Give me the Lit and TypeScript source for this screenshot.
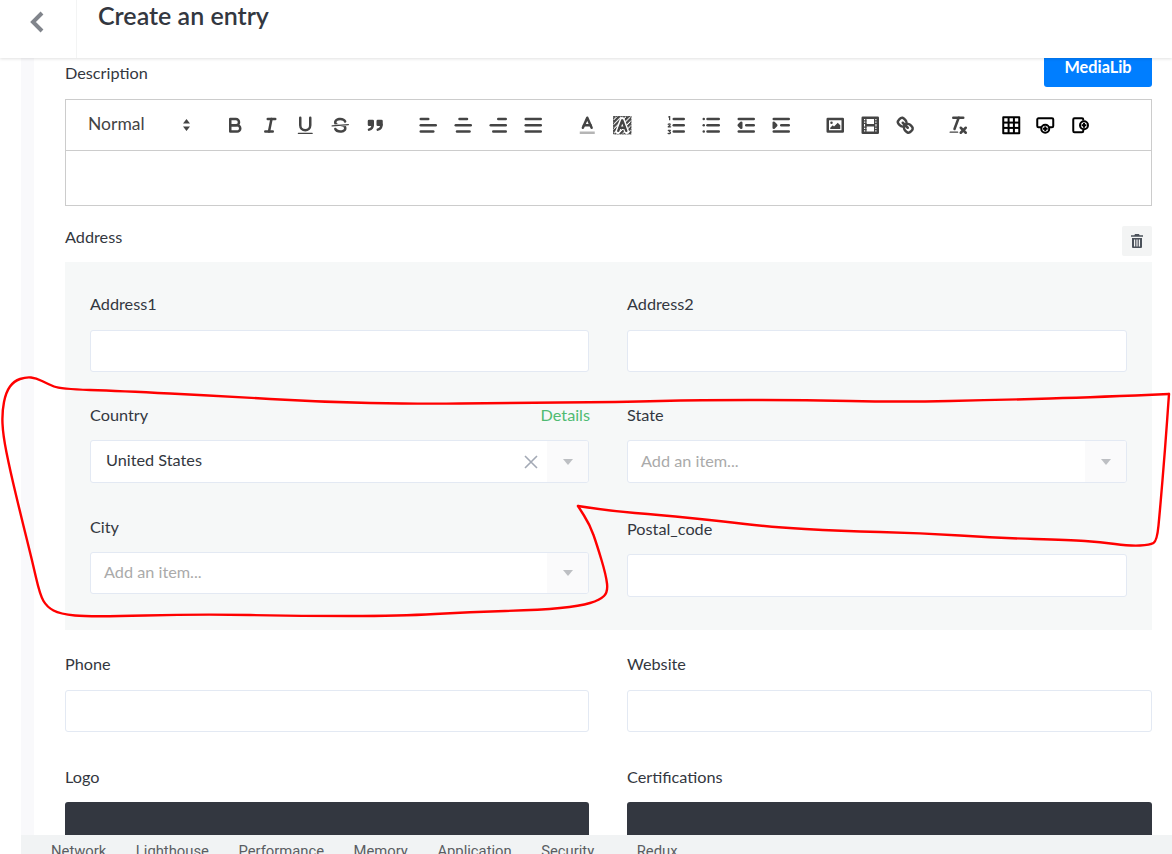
import { LitElement, html, css, svg } from "lit";
import { customElement } from "lit/decorators.js";

const line = (x1: number, x2: number, y1: number, y2: number) =>
  svg`<line x1=${x1} x2=${x2} y1=${y1} y2=${y2}></line>`;
const fr = (x: number, y: number, w: number, h: number) =>
  svg`<rect class="f" x=${x} y=${y} width=${w} height=${h}></rect>`;

const I = {
  bold: svg`<path d="M5,4H9.5A2.5,2.5,0,0,1,12,6.5v0A2.5,2.5,0,0,1,9.5,9H5V4Z"></path><path d="M5,9h5.5A2.5,2.5,0,0,1,13,11.5v0A2.5,2.5,0,0,1,10.5,14H5V9Z"></path>`,
  italic: svg`${line(7, 13, 4, 4)}${line(5, 11, 14, 14)}${line(8, 10, 14, 4)}`,
  underline: svg`<path d="M5,3V9a4,4,0,0,0,4,4H9a4,4,0,0,0,4-4V3"></path><rect class="f" x="3" y="15" width="12" height="1" rx=".5"></rect>`,
  strike: svg`<line class="thin" x1="15.5" x2="2.5" y1="8.5" y2="9.5"></line><path class="f" d="M9.007,8C6.542,7.791,6,7.519,6,6.5,6,5.792,7.283,5,9,5c1.571,0,2.765.679,2.969,1.309a1,1,0,0,0,1.9-.617C13.356,4.106,11.354,3,9,3,6.2,3,4,4.538,4,6.5a3.2,3.2,0,0,0,.5,1.843Z"></path><path class="f" d="M8.984,10C11.457,10.208,12,10.479,12,11.5c0,.708-1.283,1.5-3,1.5-1.571,0-2.765-.679-2.969-1.309a1,1,0,1,0-1.9.617C4.644,13.894,6.646,15,9,15c2.8,0,5-1.538,5-3.5a3.2,3.2,0,0,0-.5-1.843Z"></path>`,
  quote: svg`<rect class="fs" x="4" y="5.5" width="3" height="3"></rect><rect class="fs" x="11" y="5.5" width="3" height="3"></rect><path d="M7,8.5c0,2.209-1.343,3.5-3,4"></path><path d="M14,8.5c0,2.209-1.343,3.5-3,4"></path>`,
  left: svg`${line(3, 15, 9, 9)}${line(3, 13, 14, 14)}${line(3, 9, 4, 4)}`,
  center: svg`${line(3, 15, 9, 9)}${line(4, 14, 14, 14)}${line(6, 12, 4, 4)}`,
  right: svg`${line(3, 15, 9, 9)}${line(5, 15, 14, 14)}${line(9, 15, 4, 4)}`,
  justify: svg`${line(3, 15, 9, 9)}${line(3, 15, 14, 14)}${line(3, 15, 4, 4)}`,
  color: svg`<line class="swatch" x1="3" x2="15" y1="15" y2="15"></line><polyline points="5.5 11 9 3 12.5 11"></polyline>${line(11.63, 6.38, 9, 9)}`,
  background: svg`<defs><pattern id="hatch" width="2.6" height="2.6" patternUnits="userSpaceOnUse" patternTransform="rotate(-45)"><rect width="2.6" height="0.8" fill="#444"></rect></pattern></defs><rect class="hatch" x="2" y="2" width="14" height="14" fill="url(#hatch)"></rect><g class="halo"><polyline points="5.5 14 9 4.5 12.5 14"></polyline></g><polyline class="mid" points="5.8 13.5 9 5 12.2 13.5"></polyline>${line(11, 7, 11, 11)}`,
  ordered: svg`${line(7, 15, 4, 4)}${line(7, 15, 9, 9)}${line(7, 15, 14, 14)}<path class="f" d="M3.2,1.6h1V5h-1V2.8h-.7V2.2Z"></path><path class="thin" d="M2.6,8.2q.9-.8,1.6,0q.2.6-1.6,2h1.9"></path><path class="thin" d="M2.6,13h1.7l-.9,1.1q1.3.2.8,1.3q-.7.7-1.7.1"></path>`,
  bullet: svg`${line(6, 15, 4, 4)}${line(6, 15, 9, 9)}${line(6, 15, 14, 14)}${line(3, 3, 4, 4)}${line(3, 3, 9, 9)}${line(3, 3, 14, 14)}`,
  outdent: svg`${line(3, 15, 14, 14)}${line(3, 15, 4, 4)}${line(9, 15, 9, 9)}<polygon class="fs" points="5 7 5 11 3 9 5 7"></polygon>`,
  indent: svg`${line(3, 15, 14, 14)}${line(3, 15, 4, 4)}${line(9, 15, 9, 9)}<polygon class="fs" points="3 7 3 11 5 9 3 7"></polygon>`,
  image: svg`<rect x="3" y="4" width="12" height="10"></rect><circle class="f" cx="6" cy="7" r="1"></circle><polygon class="f" points="5 12 5 11 7 9 8 10 11 7 13 9 13 12 5 12"></polygon>`,
  video: svg`<rect x="3" y="3" width="12" height="12"></rect>${fr(5, 3, 1, 12)}${fr(12, 3, 1, 12)}${fr(5, 8, 8, 2)}${fr(3, 5, 3, 1)}${fr(3, 7, 3, 1)}${fr(3, 10, 3, 1)}${fr(3, 12, 3, 1)}${fr(12, 5, 3, 1)}${fr(12, 7, 3, 1)}${fr(12, 10, 3, 1)}${fr(12, 12, 3, 1)}`,
  link: svg`${line(7, 11, 7, 11)}<path d="M8.9,4.577a3.476,3.476,0,0,1,.36,4.679A3.476,3.476,0,0,1,4.577,8.9C3.185,7.5,2.035,6.4,4.217,4.217S7.5,3.185,8.9,4.577Z"></path><path d="M13.423,9.1a3.476,3.476,0,0,0-4.679-.36,3.476,3.476,0,0,0,.36,4.679c1.392,1.392,2.5,2.542,4.679.36S14.815,10.5,13.423,9.1Z"></path>`,
  clean: svg`${line(5, 13, 3, 3)}${line(6, 9.35, 12, 3)}${line(11, 15, 11, 15)}${line(15, 11, 11, 15)}<rect class="f" x="2" y="14" width="7" height="1" rx=".5"></rect>`,
  table: svg`<g class="black"><rect x="2.6" y="2.6" width="12.8" height="12.8"></rect>${line(6.87, 6.87, 2.6, 15.4)}${line(11.13, 11.13, 2.6, 15.4)}${line(2.6, 15.4, 6.87, 6.87)}${line(2.6, 15.4, 11.13, 11.13)}</g>`,
  row: svg`<g class="black"><path d="M5,10.6H2.8a1,1,0,0,1-1-1V4.4a1,1,0,0,1,1-1H13.6a1,1,0,0,1,1,1V9.6a1,1,0,0,1-1,1H11.4"></path><circle class="pale" cx="8.2" cy="11.8" r="3.2"></circle>${line(6.3, 10.1, 11.8, 11.8)}${line(8.2, 8.2, 9.9, 13.7)}</g>`,
  col: svg`<g class="black"><path d="M10.6,5.2V4.4a1,1,0,0,0-1-1H3.6a1,1,0,0,0-1,1V13.6a1,1,0,0,0,1,1h6a1,1,0,0,0,1-1V12.8"></path><circle class="pale" cx="11.2" cy="9" r="3.2"></circle>${line(9.3, 13.1, 9, 9)}${line(11.2, 11.2, 7.1, 10.9)}</g>`,
};

const GROUPS = [
  [I.bold, I.italic, I.underline, I.strike, I.quote],
  [I.left, I.center, I.right, I.justify],
  [I.color, I.background],
  [I.ordered, I.bullet, I.outdent, I.indent],
  [I.image, I.video, I.link],
  [I.clean],
  [I.table, I.row, I.col],
];

const TABS = ["Network", "Lighthouse", "Performance", "Memory", "Application", "Security"];

type P = [number, number];
const smooth = (pts: P[]) => {
  let d = `M${pts[0][0]},${pts[0][1]}`;
  for (let i = 1; i < pts.length - 1; i++) {
    const mx = (pts[i][0] + pts[i + 1][0]) / 2;
    const my = (pts[i][1] + pts[i + 1][1]) / 2;
    d += ` Q${pts[i][0]},${pts[i][1]} ${mx},${my}`;
  }
  const e = pts[pts.length - 1];
  return d + ` L${e[0]},${e[1]}`;
};

const STROKE_A: P[] = [
  [1169, 394], [1100, 397], [1000, 400], [900, 402], [800, 400], [700, 400], [620, 402], [500, 403],
  [420, 404], [320, 402], [220, 396], [120, 391], [60, 389], [48, 384], [36, 378], [26, 377], [14, 381],
  [6, 392], [2, 412], [3, 435], [10, 470], [22, 520], [32, 560], [40, 595], [47, 607], [60, 614],
  [90, 617], [200, 614], [300, 616], [400, 616], [470, 612], [540, 610], [580, 606], [600, 600],
  [608, 592], [606, 575], [597, 545], [590, 525], [578, 506],
];
const STROKE_B: P[] = [
  [578, 506], [610, 511], [660, 515], [720, 521], [770, 527], [840, 531], [920, 533], [1000, 538],
  [1070, 540], [1100, 542], [1130, 546], [1150, 545], [1157, 541], [1160, 510], [1165, 450], [1169, 394],
];

@customElement("app-root")
export class AppRoot extends LitElement {
  static styles = css`
    :host { display: block; width: 1172px; height: 854px; }
    * { box-sizing: border-box; }
    .page {
      position: relative; width: 1172px; height: 854px; overflow: hidden; background: #fff;
      display: flex; flex-direction: column; font-family: Lato, "Open Sans", sans-serif;
      color: #333740; font-size: 16.25px;
    }
    header {
      flex: 0 0 58px; display: flex; background: #fff; position: relative; z-index: 2;
      box-shadow: 0 1px 3px rgba(0, 0, 0, 0.12);
    }
    .back { width: 77px; border-right: 1px solid #f3f4f4; padding: 11px 0 0 28px; }
    .back svg { display: block; width: 18px; height: 22px; fill: none; stroke: #81858c; stroke-width: 4; }
    h1 { margin: 0; padding: 0 0 0 21px; font-size: 25px; line-height: 30px; font-weight: 600; color: #333740; }
    .main { flex: 1; min-height: 0; margin-left: 21px; display: flex; overflow: hidden; }
    .strip { width: 13px; background: #f9f9fb; flex: none; }
    .content { flex: 1; min-width: 0; padding: 0 20px 0 31px; }
    .desc-head { height: 41px; display: flex; justify-content: space-between; }
    .label { display: block; height: 20px; line-height: 20px; font-size: 16.25px; white-space: nowrap; }
    .desc-head .label { margin-top: 5px; }
    .media {
      width: 108px; height: 29px; padding-top: 1px; background: #007eff; color: #fff; font-weight: 700;
      font-size: 16.25px; line-height: 15px; text-align: center; border-radius: 0 0 3px 3px;
    }
    .editor { height: 107px; border: 1px solid #ccc; }
    .toolbar { height: 51px; border-bottom: 1px solid #ccc; padding-left: 10px; display: flex; align-items: center; }
    .picker {
      width: 122.5px; margin-right: 18.75px; padding: 0 8px 3px 12px; display: flex; justify-content: space-between;
      align-items: center; font-size: 17.5px; line-height: 22px; color: #444;
    }
    .picker svg { width: 9px; height: 14px; fill: #444; margin-top: 3px; }
    .grp { display: flex; margin-right: 18.75px; }
    .grp.tbl { margin-left: -1.5px; }
    .btn { width: 35px; height: 30px; display: flex; align-items: center; justify-content: center; }
    .btn svg { width: 22.5px; height: 22.5px; flex: none; fill: none; stroke: #444; stroke-width: 2; stroke-linecap: round; stroke-linejoin: round; }
    .btn svg .f { fill: #444; stroke: none; }
    .btn svg .fs { fill: #444; }
    .btn svg .thin { stroke-width: 1; }
    .btn svg .swatch { stroke: #b5b5b5; stroke-linecap: butt; }
    .btn svg .hatch { stroke: #444; stroke-width: 0.7; stroke-dasharray: 1 1; }
    .btn svg .halo polyline { stroke: #fff; stroke-width: 4; }
    .btn svg .mid { stroke-width: 1.9; }
    .btn svg .black { stroke: #000; stroke-width: 1.6; stroke-linecap: butt; }
    .btn svg .pale { fill: #fff; }
    .addr-head { display: flex; justify-content: space-between; height: 56px; padding-top: 20px; }
    .addr-head .label { margin-top: 1px; }
    .trash {
      width: 30px; height: 30px; background: #f3f4f4; border-radius: 2px; display: flex;
      align-items: center; justify-content: center;
    }
    .trash svg { width: 12px; height: 14px; }
    .panel { background: #f6f8f8; height: 368px; padding: 32px 25px 33px; display: flex; flex-direction: column; }
    .row { display: grid; grid-template-columns: 499px 500px; column-gap: 38px; }
    .row + .row { margin-top: 34px; }
    .row.first + .row { margin-top: 33px; }
    .wide { grid-template-columns: 524px 525px; }
    .phone { margin-top: 24px; }
    .row.wide + .row.wide { margin-top: 35px; }
    .head { display: flex; justify-content: space-between; }
    .details { font-size: 16.25px; line-height: 20px; color: #4fbb72; margin-right: -1px; }
    .input { height: 42px; margin-top: 16px; background: #fff; border: 1px solid #e3e9f3; border-radius: 3px; }
    .input.postal { margin-top: 15px; height: 43px; }
    .shift { margin-top: 2px; }
    .select {
      margin-top: 15px; background: #fff; border: 1px solid #e3e9f3; border-radius: 3px; height: 42px;
      display: flex; align-items: center; overflow: hidden;
    }
    .select.tall { height: 43px; }
    .select .value { flex: 1; padding: 0 0 4px 15px; font-size: 16.25px; color: #333740; }
    .select .ph { flex: 1; padding: 0 0 3px 13px; font-size: 16.25px; color: #aaa; }
    .select .x { width: 14px; height: 14px; margin-right: 9px; fill: none; stroke: #a3a9b5; stroke-width: 1.6; }
    .caret-box { width: 41px; height: 100%; background: #fafafb; display: flex; align-items: center; justify-content: center; }
    .caret { width: 0; height: 0; border: 5px solid transparent; border-top: 6px solid #bdbfc3; border-bottom: 0; }
    .dark { height: 60px; margin-top: 15px; background: #333740; border-radius: 3px; }
    .devtools {
      position: absolute; left: 21px; right: 0; top: 835px; height: 19px; background: #f1f3f4; overflow: hidden;
      display: flex; gap: 29.5px; padding: 7px 0 0 30px; font-family: Roboto, sans-serif; font-size: 14.8px;
      line-height: 18px; color: #5a5d62; z-index: 3;
    }
    .devtools .redux { margin-left: 13px; }
    .scribble { position: absolute; inset: 0; width: 1172px; height: 854px; pointer-events: none; z-index: 4; fill: none; stroke: #f00; stroke-width: 2.4; stroke-linejoin: round; stroke-linecap: round; }
  `;

  private field(label: string) {
    return html`<div><span class="label">${label}</span><div class="input"></div></div>`;
  }

  private select(label: string, value: string, tall: boolean, details = false) {
    return html`<div>
      <div class="head"><span class="label">${label}</span>${details ? html`<span class="details">Details</span>` : ""}</div>
      <div class="select ${tall ? "tall" : ""}">
        ${value
          ? html`<span class="value">${value}</span><svg class="x" viewBox="0 0 14 14"><path d="M1 1L13 13M13 1L1 13"></path></svg>`
          : html`<span class="ph">Add an item...</span>`}
        <div class="caret-box"><div class="caret"></div></div>
      </div>
    </div>`;
  }

  render() {
    return html`<div class="page">
      <header>
        <div class="back"><svg viewBox="0 0 18 22"><path d="M14 2L5 11L14 20"></path></svg></div>
        <h1>Create an entry</h1>
      </header>
      <div class="main">
        <div class="strip"></div>
        <div class="content">
          <div class="desc-head">
            <span class="label">Description</span>
            <div class="media">MediaLib</div>
          </div>
          <div class="editor">
            <div class="toolbar">
              <div class="picker">
                <span>Normal</span>
                <svg viewBox="0 0 9 14"><path d="M4.5 1L8 5.5H1Z M4.5 13L1 8.5H8Z"></path></svg>
              </div>
              ${GROUPS.map(
                (g, n) => html`<div class="grp ${n === GROUPS.length - 1 ? "tbl" : ""}">
                  ${g.map((i) => html`<div class="btn"><svg viewBox="0 0 18 18">${i}</svg></div>`)}
                </div>`
              )}
            </div>
          </div>
          <div class="addr-head">
            <span class="label">Address</span>
            <div class="trash">
              <svg viewBox="0 0 12 14"><path fill="#4b515a" d="M4 0h4l.6 1.2H12v1.6H0V1.2h3.4ZM1 4h10v9a1 1 0 0 1-1 1H2a1 1 0 0 1-1-1ZM3 5.5v7h1.2v-7ZM5.4 5.5v7h1.2v-7ZM7.8 5.5v7H9v-7Z" fill-rule="evenodd"></path></svg>
            </div>
          </div>
          <div class="panel">
            <div class="row first">${this.field("Address1")}${this.field("Address2")}</div>
            <div class="row">
              ${this.select("Country", "United States", true, true)}${this.select("State", "", true)}
            </div>
            <div class="row">
              ${this.select("City", "", false)}
              <div class="shift"><span class="label">Postal_code</span><div class="input postal"></div></div>
            </div>
          </div>
          <div class="row wide phone">${this.field("Phone")}${this.field("Website")}</div>
          <div class="row wide">
            <div><span class="label">Logo</span><div class="dark"></div></div>
            <div><span class="label">Certifications</span><div class="dark"></div></div>
          </div>
        </div>
      </div>
      <div class="devtools">
        ${TABS.map((t) => html`<span>${t}</span>`)}<span class="redux">Redux</span>
      </div>
      <svg class="scribble" viewBox="0 0 1172 854">
        <path d=${smooth(STROKE_A)}></path>
        <path d=${smooth(STROKE_B)}></path>
      </svg>
    </div>`;
  }
}
